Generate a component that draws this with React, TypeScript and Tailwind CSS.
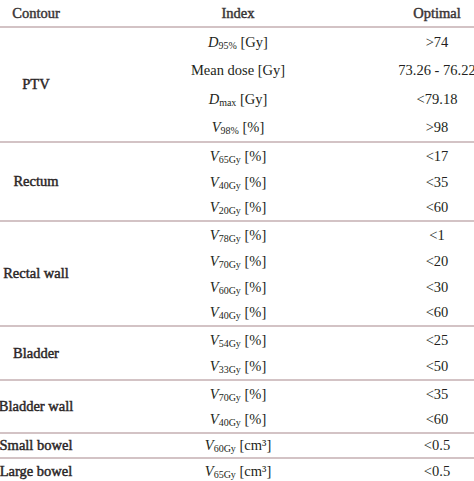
type Metric = { sym: string; sub: string; unit: string; value: string; plain?: boolean };
type Group = { contour: string; heights: string[]; rows: Metric[] };

const groups: Group[] = [
  {
    contour: "PTV",
    heights: ["h-[28px]", "h-[29px]", "h-[28px]", "h-[28px]"],
    rows: [
      { sym: "D", sub: "95%", unit: "[Gy]", value: ">74" },
      { sym: "Mean dose", sub: "", unit: "[Gy]", value: "73.26 - 76.22", plain: true },
      { sym: "D", sub: "max", unit: "[Gy]", value: "<79.18" },
      { sym: "V", sub: "98%", unit: "[%]", value: ">98" },
    ],
  },
  {
    contour: "Rectum",
    heights: ["h-[26px]", "h-[26px]", "h-[25px]"],
    rows: [
      { sym: "V", sub: "65Gy", unit: "[%]", value: "<17" },
      { sym: "V", sub: "40Gy", unit: "[%]", value: "<35" },
      { sym: "V", sub: "20Gy", unit: "[%]", value: "<60" },
    ],
  },
  {
    contour: "Rectal wall",
    heights: ["h-[26px]", "h-[26px]", "h-[26px]", "h-[25px]"],
    rows: [
      { sym: "V", sub: "78Gy", unit: "[%]", value: "<1" },
      { sym: "V", sub: "70Gy", unit: "[%]", value: "<20" },
      { sym: "V", sub: "60Gy", unit: "[%]", value: "<30" },
      { sym: "V", sub: "40Gy", unit: "[%]", value: "<60" },
    ],
  },
  {
    contour: "Bladder",
    heights: ["h-[26px]", "h-[26px]"],
    rows: [
      { sym: "V", sub: "54Gy", unit: "[%]", value: "<25" },
      { sym: "V", sub: "33Gy", unit: "[%]", value: "<50" },
    ],
  },
  {
    contour: "Bladder wall",
    heights: ["h-[26px]", "h-[25px]"],
    rows: [
      { sym: "V", sub: "70Gy", unit: "[%]", value: "<35" },
      { sym: "V", sub: "40Gy", unit: "[%]", value: "<60" },
    ],
  },
  {
    contour: "Small bowel",
    heights: ["h-[23px]"],
    rows: [{ sym: "V", sub: "60Gy", unit: "[cm³]", value: "<0.5" }],
  },
  {
    contour: "Large bowel",
    heights: ["h-[24px]"],
    rows: [{ sym: "V", sub: "65Gy", unit: "[cm³]", value: "<0.5" }],
  },
];

const IndexCell = ({ m }: { m: Metric }) => {
  if (m.plain) {
    return (
      <span>
        {m.sym} {m.unit}
      </span>
    );
  }
  return (
    <span className="whitespace-nowrap">
      <span className="italic">{m.sym}</span>
      <span className="relative top-[2px] text-[10px]">{m.sub}</span>{" "}
      {m.unit}
    </span>
  );
};

export default function App() {
  return (
    <div
      className="w-[474px] h-[481px] overflow-hidden bg-white text-[#231f20] text-[14.5px] leading-none"
      style={{ fontFamily: '"Liberation Serif", "DejaVu Serif", serif' }}
    >
      {/* header */}
      <div className="flex h-[28px] items-center border-b-2 border-[#d3c3c5] text-[#3a3536] [-webkit-text-stroke:0.45px_#3a3536]">
        <div className="w-[72px] shrink-0 text-center">Contour</div>
        <div className="w-[332px] shrink-0 text-center">Index</div>
        <div className="w-[66px] shrink-0 text-center whitespace-nowrap">Optimal</div>
      </div>

      {groups.map((g) => (
        <div key={g.contour} className="flex border-b-2 border-[#d3c3c5]">
          <div className="w-[72px] shrink-0 flex items-center justify-center whitespace-nowrap text-[#2b2627] [-webkit-text-stroke:0.45px_#2b2627]">
            {g.contour}
          </div>
          <div className="flex flex-col">
            {g.rows.map((m, i) => (
              <div key={i} className={`flex items-center ${g.heights[i]}`}>
                <div className="w-[332px] shrink-0 text-center">
                  <IndexCell m={m} />
                </div>
                <div className="w-[66px] shrink-0 flex justify-center whitespace-nowrap">{m.value}</div>
              </div>
            ))}
          </div>
        </div>
      ))}
    </div>
  );
}
